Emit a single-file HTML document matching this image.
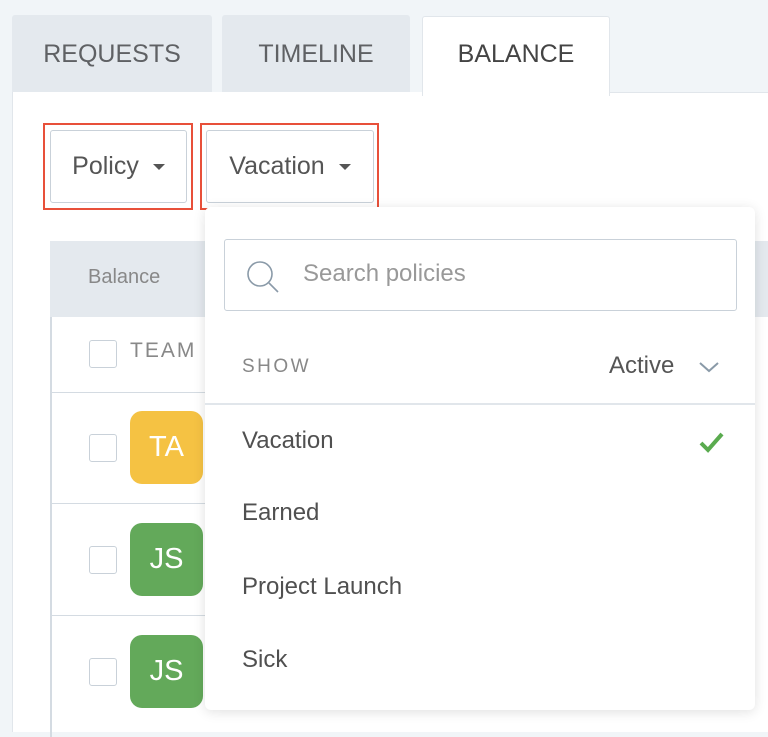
<!DOCTYPE html>
<html><head><style>
*{box-sizing:border-box;margin:0;padding:0}
body{width:768px;height:724px;background:#f1f5f8;position:relative;overflow:hidden;font-family:"Liberation Sans",Arial,sans-serif;color:#555}
.abs{position:absolute}
.tab{position:absolute;top:15px;height:78px;background:#e4e9ee;border-radius:3px 3px 0 0;font-size:25px;color:#5f6164;text-align:center;line-height:78px}
.panel{left:12px;top:92px;width:760px;height:640px;background:#fff;border-left:1px solid #e1e6eb}
.red{border:2px solid #e8503a}
.btn{border:1.5px solid #c9d1d9;border-radius:3px;background:#fff;font-size:25px;color:#555;display:flex;align-items:center;justify-content:center}
.caret{display:inline-block;width:0;height:0;border-left:6px solid transparent;border-right:6px solid transparent;border-top:6px solid #555;margin-left:14px}
.cb{position:absolute;width:28px;height:28px;border:1.5px solid #c9d1d9;border-radius:3px;background:#fff}
.av{position:absolute;left:130px;width:73px;height:73px;border-radius:12px;color:#fff;font-size:29px;text-align:center;line-height:73px}
.row{position:absolute;left:50px;width:200px;border-top:1.5px solid #d4dbe2}
.item{position:absolute;left:242px;font-size:24px;color:#505050}
</style></head><body>
<div class="tab" style="left:12px;width:200px">REQUESTS</div>
<div class="tab" style="left:222px;width:188px">TIMELINE</div>
<div class="abs panel"></div>
<div class="tab" style="left:422px;top:16px;width:188px;height:80px;background:#fff;border:1px solid #e1e6eb;border-bottom:none;color:#444;line-height:74px">BALANCE</div>
<div class="abs" style="left:610px;top:92px;width:160px;height:1px;background:#e1e6eb"></div>

<div class="abs red" style="left:43px;top:123px;width:150px;height:87px"></div>
<div class="abs btn" style="left:50px;top:130px;width:137px;height:73px">Policy<span class="caret"></span></div>
<div class="abs red" style="left:200px;top:123px;width:179px;height:87px"></div>
<div class="abs btn" style="left:206px;top:130px;width:168px;height:73px">Vacation<span class="caret"></span></div>

<div class="abs" style="left:50px;top:241px;width:720px;height:76px;background:#e4e9ee"></div>
<div class="abs" style="left:88px;top:266px;font-size:20px;color:#888">Balance</div>
<div class="abs" style="left:50px;top:317px;width:1.5px;height:420px;background:#d4dbe2"></div>
<div class="row" style="top:392px"></div>
<div class="row" style="top:503px"></div>
<div class="row" style="top:615px"></div>
<div class="cb" style="left:89px;top:340px"></div>
<div class="abs" style="left:130px;top:339px;font-size:21px;letter-spacing:2px;color:#888">TEAM</div>
<div class="cb" style="left:89px;top:434px"></div>
<div class="cb" style="left:89px;top:546px"></div>
<div class="cb" style="left:89px;top:658px"></div>
<div class="av" style="top:411px;background:#f5c243">TA</div>
<div class="av" style="top:523px;background:#63a95a">JS</div>
<div class="av" style="top:635px;background:#63a95a">JS</div>

<div class="abs" style="left:205px;top:207px;width:550px;height:503px;background:#fff;border-radius:6px;box-shadow:0 2px 12px rgba(0,0,0,0.12)"></div>
<div class="abs" style="left:224px;top:239px;width:513px;height:72px;border:1.5px solid #c9d1d9;border-radius:3px"></div>
<svg class="abs" style="left:242px;top:256px" width="40" height="40" viewBox="0 0 40 40"><circle cx="18" cy="18" r="12" fill="none" stroke="#8a9aa8" stroke-width="1.6"/><line x1="27" y1="27" x2="36" y2="36" stroke="#8a9aa8" stroke-width="1.6"/></svg>
<div class="abs" style="left:303px;top:260px;font-size:24px;color:#999">Search policies</div>
<div class="abs" style="left:242px;top:356px;font-size:19px;letter-spacing:2.5px;color:#888">SHOW</div>
<div class="abs" style="left:609px;top:352px;font-size:24px;color:#555">Active</div>
<svg class="abs" style="left:698px;top:360px" width="22" height="14" viewBox="0 0 22 14"><polyline points="2,3 11,11 20,3" fill="none" stroke="#8a9aa8" stroke-width="2"/></svg>
<div class="abs" style="left:205px;top:403px;width:550px;height:1.5px;background:#e1e6eb"></div>
<div class="item" style="top:427px">Vacation</div>
<svg class="abs" style="left:698px;top:430px" width="28" height="24" viewBox="0 0 28 24"><polyline points="3,13 10,20 24,4" fill="none" stroke="#5aab4f" stroke-width="4"/></svg>
<div class="item" style="top:499px">Earned</div>
<div class="item" style="top:573px">Project Launch</div>
<div class="item" style="top:646px">Sick</div>
</body></html>
